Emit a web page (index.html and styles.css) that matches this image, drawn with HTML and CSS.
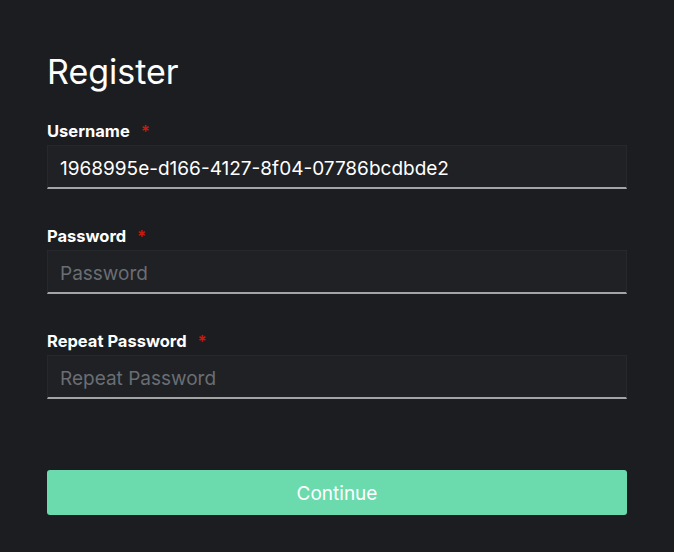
FILE: index.html
```html
<!DOCTYPE html>
<html lang="en">
<head>
<meta charset="utf-8">
<title>Register</title>
<link rel="stylesheet" href="styles.css">
</head>
<body>
<main class="page">
  <h1 class="title">Register</h1>
  <form class="form">
    <div class="group">
      <label class="label" for="username">Username <span class="req">*</span></label>
      <input class="input" id="username" type="text" value="1968995e-d166-4127-8f04-07786bcdbde2">
    </div>
    <div class="group">
      <label class="label" for="password">Password <span class="req">*</span></label>
      <input class="input" id="password" type="password" placeholder="Password">
    </div>
    <div class="group">
      <label class="label" for="password-confirm">Repeat Password <span class="req">*</span></label>
      <input class="input" id="password-confirm" type="password" placeholder="Repeat Password">
    </div>
    <button class="btn" type="button">Continue</button>
  </form>
</main>
</body>
</html>
```
FILE: styles.css
```css
html, body {
  margin: 0;
  padding: 0;
  background: #1b1d21;
  height: 100%;
}
body {
  font-family: "Inter", "Open Sans", sans-serif;
  color: #ffffff;
}
.page {
  padding: 52px 47px 0 47px;
  width: 580px;
}
.title {
  margin: 0;
  font-size: 34px;
  line-height: 40px;
  font-weight: 400;
}
.form {
  margin-top: 27px;
  display: flex;
  flex-direction: column;
  gap: 35px;
}
.group {
  display: flex;
  flex-direction: column;
  gap: 2px;
}
.label {
  font-size: 16.5px;
  line-height: 24px;
  font-weight: 700;
  height: 24px;
}
.req {
  color: #c9190b;
  margin-left: 7px;
  font-weight: 700;
}
.input {
  box-sizing: border-box;
  height: 44px;
  width: 100%;
  margin: 0;
  padding: 3px 12px 0 12px;
  background: #1f2125;
  border: 1px solid #26282c;
  border-bottom: 2px solid #a2a4a6;
  color: #ffffff;
  font-family: inherit;
  font-size: 19px;
  outline: none;
}
.input::placeholder {
  color: #6a6e73;
}
.btn {
  margin-top: 36px;
  height: 45px;
  width: 100%;
  border: none;
  border-radius: 3px;
  background: #6bdbad;
  color: #ffffff;
  font-family: inherit;
  font-size: 19px;
  padding: 2px 0 0 0;
  cursor: pointer;
}
```
